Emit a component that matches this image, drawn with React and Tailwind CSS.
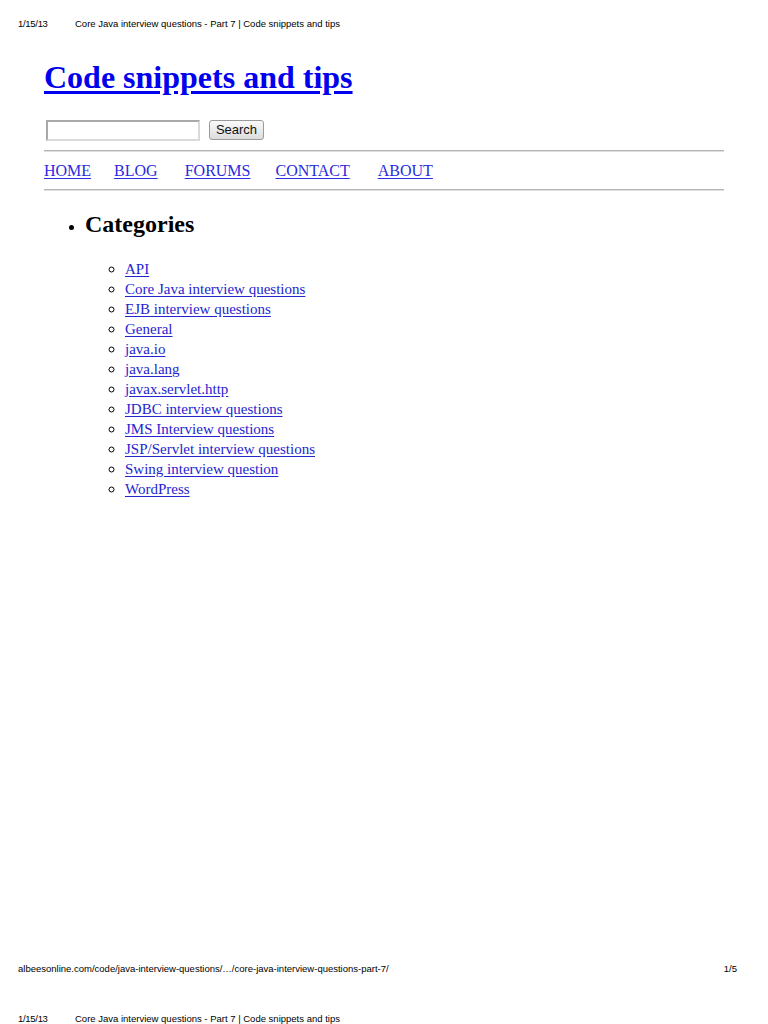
import React from "react";

const cats = [
  "API",
  "Core Java interview questions",
  "EJB interview questions",
  "General",
  "java.io",
  "java.lang",
  "javax.servlet.http",
  "JDBC interview questions",
  "JMS Interview questions",
  "JSP/Servlet interview questions",
  "Swing interview question",
  "WordPress",
];

const nav = [
  { t: "HOME", c: "mr-[23px]" },
  { t: "BLOG", c: "mr-[27px]" },
  { t: "FORUMS", c: "mr-[25px]" },
  { t: "CONTACT", c: "mr-[28px]" },
  { t: "ABOUT", c: "" },
];

function PrintHeader() {
  return (
    <div className="flex items-center h-[12px] text-[9.5px] leading-[12px] text-black font-['Liberation_Sans',Arial,sans-serif] pl-[18px]">
      <span className="w-[57px] tracking-[-0.3px]">1/15/13</span>
      <span>Core Java interview questions - Part 7 | Code snippets and tips</span>
    </div>
  );
}

export default function App() {
  return (
    <div className="w-[768px] h-[1024px] bg-white overflow-hidden flex flex-col font-['Liberation_Serif','Times_New_Roman',serif]">
      <div className="pt-[18px]">
        <PrintHeader />
      </div>
      <div className="flex-1 px-[44px]">
        <h1 className="mt-[27px] text-[32px] leading-[40px] font-bold">
          <a href="#" className="text-[#0000ee] underline underline-offset-[3px]">
            Code snippets and tips
          </a>
        </h1>
        <div className="mt-[22px] flex items-center gap-[9px] pl-[2px] h-[22px]">
          <input
            type="text"
            className="w-[154px] h-[21px] border-2 border-t-[#a9a9a9] border-l-[#a9a9a9] border-r-[#d9d9d9] border-b-[#d9d9d9] bg-white outline-none"
          />
          <button className="w-[55px] h-[20px] rounded-[3px] border border-[#9a9a9a] bg-gradient-to-b from-[#fafafa] to-[#dcdcdc] text-[13px] leading-[18px] text-[#111] font-['Liberation_Sans',Arial,sans-serif]">
            Search
          </button>
        </div>
        <div className="mt-[9px] w-[680px] border-t border-b border-t-[#b4b4b4] border-b-[#dedede]" />
        <nav className="flex items-center h-[37px] pt-[1px] text-[16px] leading-[20px]">
          {nav.map((n) => (
            <a key={n.t} href="#" className={`text-[#2a2ae0] underline underline-offset-[2px] ${n.c}`}>
              {n.t}
            </a>
          ))}
        </nav>
        <div className="w-[680px] border-t border-b border-t-[#b4b4b4] border-b-[#dedede]" />
        <ul className="mt-[19px] list-disc pl-[41px]">
          <li className="text-[24px] leading-[28px] font-bold text-black marker:text-[16px]">
            Categories
            <ul className="mt-[21px] list-[circle] pl-[40px] font-normal">
              {cats.map((c) => (
                <li key={c} className="h-[20px] text-[15px] leading-[20px] marker:text-[12px]">
                  <a href="#" className="text-[#2424d0] underline underline-offset-[2px]">
                    {c}
                  </a>
                </li>
              ))}
            </ul>
          </li>
        </ul>
      </div>
      <div className="flex items-center h-[12px] text-[9.5px] leading-[12px] text-black font-['Liberation_Sans',Arial,sans-serif] pl-[18px] pr-[31px] justify-between">
        <span>albeesonline.com/code/java-interview-questions/…/core-java-interview-questions-part-7/</span>
        <span>1/5</span>
      </div>
      <div className="mt-[38px] h-[11px]">
        <PrintHeader />
      </div>
    </div>
  );
}
